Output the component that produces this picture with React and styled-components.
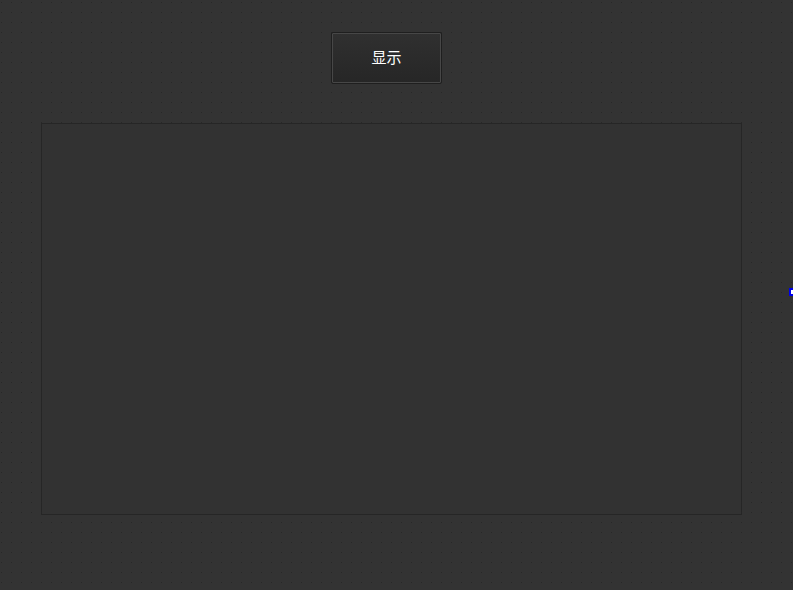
import styled, { createGlobalStyle } from "styled-components";

const GlobalStyle = createGlobalStyle`
  html, body {
    margin: 0;
    height: 100%;
    background-color: #333333;
    background-image: radial-gradient(circle at 1.5px 2.5px, #272727 0.5px, transparent 0.9px);
    background-size: 10px 10px;
    font-family: "Noto Sans CJK SC", "Noto Sans", sans-serif;
  }
`

const Page = styled.div`
  position: relative;
  width: 793px;
  height: 590px;
  display: flex;
  flex-direction: column;
  align-items: flex-start;
  padding: 32px 0 0 41px;
  box-sizing: border-box;
  overflow: hidden;
`

const ShowButton = styled.button`
  margin-left: 290px;
  width: 111px;
  height: 52px;
  border: 1px solid #1f1f1f;
  border-radius: 2px;
  padding: 0 0 4px;
  background: linear-gradient(#303030, #262626);
  box-shadow: inset 0 0 0 1px #474747;
  color: #ffffff;
  font-family: "Noto Sans CJK SC", sans-serif;
  font-size: 15px;
  font-weight: 400;
  cursor: pointer;
`

const Canvas = styled.div`
  margin-top: 39px;
  width: 699px;
  height: 390px;
  border: 1px solid #262626;
  background: #323232;
`

const Handle = styled.div`
  position: absolute;
  left: 789px;
  top: 288px;
  width: 6px;
  height: 4px;
  background: #fff;
  border: 2px solid #0000ee;
`

const App = () => {
    return (
        <Page>
            <GlobalStyle/>
            <ShowButton>显示</ShowButton>
            <Canvas/>
            <Handle/>
        </Page>
    )
}

export default App;
